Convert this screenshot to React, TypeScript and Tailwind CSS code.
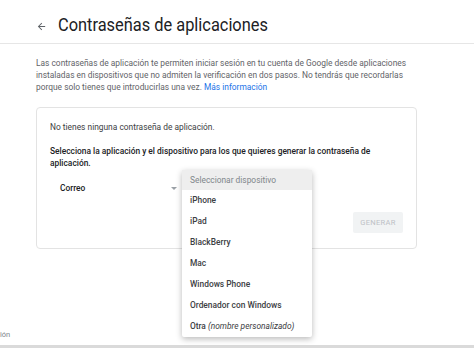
import React from "react";

const devices = [
  "iPhone",
  "iPad",
  "BlackBerry",
  "Mac",
  "Windows Phone",
  "Ordenador con Windows",
];

export default function App() {
  return (
    <div className="relative w-[474px] h-[348px] overflow-hidden bg-white flex flex-col font-['Roboto','Liberation_Sans',sans-serif]">
      {/* header */}
      <div className="h-[44px] shrink-0 border-b border-[#e6e6e6] flex items-center pl-[36px] pt-[10px]">
        <svg width="11" height="11" viewBox="0 0 24 24" className="text-[#5f6368]">
          <path d="M20 11H7.83l5.59-5.59L12 4l-8 8 8 8 1.41-1.41L7.83 13H20v-2z" fill="currentColor" />
        </svg>
        <h1 className="ml-[11px] text-[16.4px] leading-none text-[#202124] scale-y-[1.1] origin-left">Contraseñas de aplicaciones</h1>
      </div>

      <p className="mt-[13px] ml-[36px] w-[380px] text-[8.4px] leading-[12px] text-[#5f6368]">
        Las contraseñas de aplicación te permiten iniciar sesión en tu cuenta de Google desde aplicaciones
        instaladas en dispositivos que no admiten la verificación en dos pasos. No tendrás que recordarlas
        porque solo tienes que introducirlas una vez. <span className="text-[#1a73e8]">Más información</span>
      </p>

      {/* card */}
      <div className="mt-[14px] ml-[36px] w-[381px] h-[142px] shrink-0 rounded-[4px] border border-[#e3e3e3] px-[13px] pt-[13px]">
        <p className="text-[8.4px] leading-[12px] text-[#3c4043]">No tienes ninguna contraseña de aplicación.</p>
        <p className="mt-[12px] w-[330px] text-[8.4px] leading-[12px] font-medium text-[#202124]">
          Selecciona la aplicación y el dispositivo para los que quieres generar la contraseña de aplicación.
        </p>
        <div className="mt-[9px] h-[20px] flex items-center">
          <div className="w-[130px] h-full flex items-center justify-between pl-[10px] pr-[3px]">
            <span className="text-[8.4px] font-medium text-[#202124]">Correo</span>
            <span className="w-0 h-0 border-l-[3px] border-r-[3px] border-t-[3px] border-l-transparent border-r-transparent border-t-[#9aa0a6]" />
          </div>
        </div>
        <div className="mt-[14px] flex justify-end">
          <button className="w-[50px] h-[21px] bg-[#f1f3f4] rounded-[2px] text-[7.6px] tracking-[0.3px] text-[#bdc1c6]">
            GENERAR
          </button>
        </div>
      </div>

      <div className="flex-1" />
      <p className="h-[12px] text-[7.5px] leading-[12px] text-[#80868b] mb-[4px]">ión</p>
      <div className="h-[3px] shrink-0 bg-[#dadada]" />

      {/* open device menu */}
      <div className="absolute left-[182px] top-[170px] w-[130px] bg-white rounded-[2px] shadow-[0_2px_6px_rgba(0,0,0,0.28)] flex flex-col">
        <div className="h-[20px] flex items-center px-[8px] bg-[#eeeeee] text-[8.4px] text-[#80868b]">
          Seleccionar dispositivo
        </div>
        {devices.map((d) => (
          <div key={d} className="h-[21px] flex items-center px-[8px] text-[8.4px] font-medium text-[#3c4043]">
            {d}
          </div>
        ))}
        <div className="h-[21px] flex items-center px-[8px] whitespace-nowrap text-[8.4px] font-medium text-[#3c4043]">
          Otra&nbsp;<i className="font-normal">(nombre personalizado)</i>
        </div>
      </div>
    </div>
  );
}
